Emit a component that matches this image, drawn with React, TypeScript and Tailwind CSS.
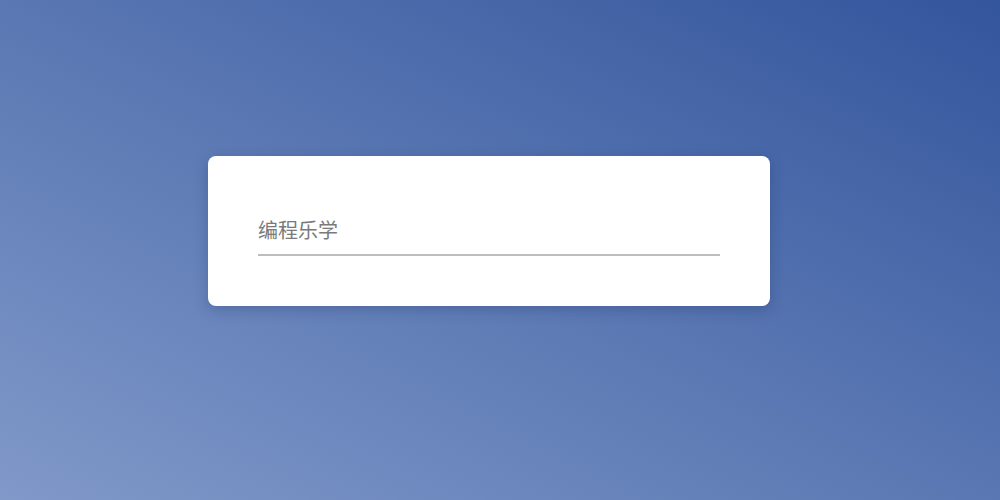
import React from 'react';

export default function App() {
  return (
    <div className="w-[1000px] h-[500px] flex items-center justify-center pr-[22px] pb-[38px] bg-[linear-gradient(to_top_right,#8099c9,#33559c)]">
      <div className="w-[562px] h-[150px] bg-white rounded-lg shadow-[0_4px_14px_rgba(20,40,90,0.25)] px-[50px] py-[50px]">
        <input
          type="text"
          placeholder="编程乐学"
          className="w-full h-[50px] pt-[2px] border-b-2 border-[#bdbdbd] outline-none text-[20px] text-[#333] placeholder:text-[#7a7a7a] bg-transparent"
          style={{ fontFamily: '"Liberation Sans", "Noto Sans CJK SC", sans-serif' }}
        />
      </div>
    </div>
  );
}
